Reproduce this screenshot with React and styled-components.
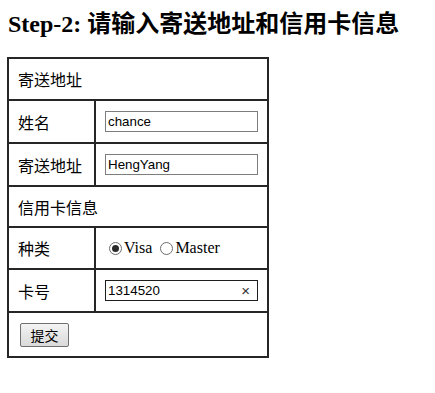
import React from "react";
import styled, { createGlobalStyle } from "styled-components";

const GlobalStyle = createGlobalStyle`
  html, body { margin: 0; padding: 0; background: #ffffff; }
`;

const Page = styled.div`
  padding: 10px 7px;
`;

const Title = styled.h2`
  margin: 0 0 19px 1px;
  font: 700 24px/28px "Liberation Serif", "Noto Sans CJK SC", serif;
  color: #000;
  white-space: nowrap;
`;

const FormTable = styled.table`
  border-collapse: separate;
  border-spacing: 0;
  border: 1px solid #262626;
  width: 262px;
  font: 16px "Noto Sans CJK SC", "Noto Sans", sans-serif;
  color: #000;
`;

const Cell = styled.td`
  box-sizing: border-box;
  border: 1px solid #262626;
  padding: 0 9px;
  width: ${(p) => (p.$label ? "87px" : "auto")};
  vertical-align: middle;
`;

const CellInner = styled.div`
  height: ${(p) => p.$h}px;
  display: flex;
  align-items: center;
  white-space: nowrap;
`;

const TextInput = styled.input`
  box-sizing: border-box;
  width: 153px;
  height: 21px;
  margin: 0;
  padding: 0 2px;
  border: 1px solid #7d7d7d;
  border-radius: 0;
  font: 13.33px "Liberation Sans", Arial, sans-serif;
  color: #000;
  background: #fff;
  outline: none;
`;

const ClearBox = styled.div`
  box-sizing: border-box;
  width: 153px;
  height: 21px;
  display: flex;
  align-items: center;
  border: 1px solid #1e1e1e;
  background: #fff;
  padding: 0 7px 0 2px;
`;

const BareInput = styled.input`
  flex: 1;
  min-width: 0;
  border: none;
  padding: 0;
  margin: 0;
  height: 19px;
  font: 13.33px "Liberation Sans", Arial, sans-serif;
  color: #000;
  outline: none;
  background: transparent;
`;

const ClearMark = styled.span`
  font: 15px/1 "Liberation Sans", Arial, sans-serif;
  color: #333;
`;

const Option = styled.label`
  display: inline-flex;
  align-items: center;
  margin-right: 4px;
  font: 16px "Liberation Serif", "Times New Roman", serif;
  color: #000;
`;

const Radio = styled.input.attrs({ type: "radio" })`
  appearance: none;
  -webkit-appearance: none;
  box-sizing: border-box;
  width: 13px;
  height: 13px;
  margin: 1px 2px 0 4px;
  border: 1px solid #6e6e6e;
  border-radius: 50%;
  background: #fff;
  display: grid;
  place-items: center;
  &:checked::after {
    content: "";
    width: 7px;
    height: 7px;
    border-radius: 50%;
    background: #2a2a2a;
  }
`;

const SubmitButton = styled.button`
  box-sizing: border-box;
  width: 49px;
  height: 24px;
  margin: 0 0 0 2px;
  padding: 0;
  border: 1px solid #707070;
  border-radius: 2px;
  background: linear-gradient(#f4f4f4, #e6e6e6 50%, #dadada);
  font: 14px "Noto Sans CJK SC", sans-serif;
  color: #000;
`;

export default function App() {
  return (
    <>
      <GlobalStyle />
      <Page>
        <Title>Step-2: 请输入寄送地址和信用卡信息</Title>
        <FormTable>
          <tbody>
            <tr>
              <Cell colSpan={2}>
                <CellInner $h={40}>寄送地址</CellInner>
              </Cell>
            </tr>
            <tr>
              <Cell $label>
                <CellInner $h={41}>姓名</CellInner>
              </Cell>
              <Cell>
                <CellInner $h={41}>
                  <TextInput defaultValue="chance" />
                </CellInner>
              </Cell>
            </tr>
            <tr>
              <Cell $label>
                <CellInner $h={41}>寄送地址</CellInner>
              </Cell>
              <Cell>
                <CellInner $h={41}>
                  <TextInput defaultValue="HengYang" />
                </CellInner>
              </Cell>
            </tr>
            <tr>
              <Cell colSpan={2}>
                <CellInner $h={39}>信用卡信息</CellInner>
              </Cell>
            </tr>
            <tr>
              <Cell $label>
                <CellInner $h={40}>种类</CellInner>
              </Cell>
              <Cell>
                <CellInner $h={40}>
                  <Option>
                    <Radio name="card" defaultChecked />
                    Visa
                  </Option>
                  <Option>
                    <Radio name="card" />
                    Master
                  </Option>
                </CellInner>
              </Cell>
            </tr>
            <tr>
              <Cell $label>
                <CellInner $h={41}>卡号</CellInner>
              </Cell>
              <Cell>
                <CellInner $h={41}>
                  <ClearBox>
                    <BareInput defaultValue="1314520" />
                    <ClearMark>×</ClearMark>
                  </ClearBox>
                </CellInner>
              </Cell>
            </tr>
            <tr>
              <Cell colSpan={2}>
                <CellInner $h={43}>
                  <SubmitButton type="button">提交</SubmitButton>
                </CellInner>
              </Cell>
            </tr>
          </tbody>
        </FormTable>
      </Page>
    </>
  );
}
